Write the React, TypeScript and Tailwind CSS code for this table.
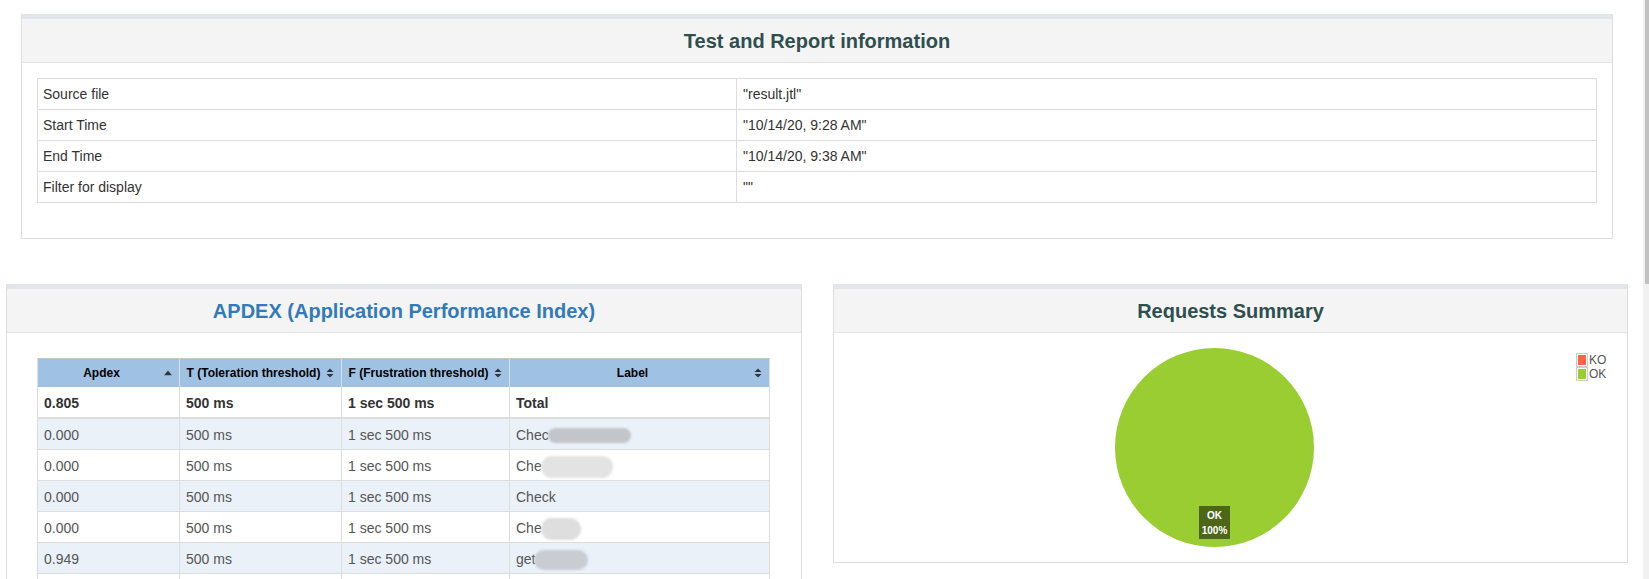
import type React from 'react';

const font = { fontFamily: '"Liberation Sans", Arial, sans-serif' };

const infoRows = [
  ['Source file', '"result.jtl"'],
  ['Start Time', '"10/14/20, 9:28 AM"'],
  ['End Time', '"10/14/20, 9:38 AM"'],
  ['Filter for display', '""'],
];

// blurred-out labels in the screenshot
const apdexRows = [
  { apdex: '0.000', label: 'Chec', blur: 'w-[83px] h-[15px] bg-[#c3c5ca]' },
  { apdex: '0.000', label: 'Che', blur: 'w-[72px] h-[22px] bg-[#e3e3e3]' },
  { apdex: '0.000', label: 'Check', blur: '' },
  { apdex: '0.000', label: 'Che', blur: 'w-[40px] h-[22px] bg-[#dedede]' },
  { apdex: '0.949', label: 'get', blur: 'w-[54px] h-[20px] bg-[#c9ccd3]' },
];

const SortAsc = () => (
  <svg width="8" height="5" viewBox="0 0 8 5">
    <path d="M0 5 L4 0 L8 5Z" fill="#333" />
  </svg>
);

const SortBoth = () => (
  <svg width="8" height="10" viewBox="0 0 8 10">
    <path d="M0.5 4 L4 0.5 L7.5 4Z M0.5 6 L7.5 6 L4 9.5Z" fill="#333" />
  </svg>
);

const PanelHeading = ({ title, blue }: { title: string; blue?: boolean }) => (
  <div
    className={`h-[44px] bg-[#f4f4f4] border-b border-[#e4e4e4] flex items-center justify-center text-[20px] font-bold ${
      blue ? 'text-[#337ab7]' : 'text-[#2f4f4f]'
    }`}
  >
    {title}
  </div>
);

const colW = ['w-[142px]', 'w-[162px]', 'w-[168px]', 'flex-1'];

export default function App(): React.ReactElement {
  return (
    <div className="w-[1649px] h-[579px] overflow-hidden bg-white flex" style={font}>
      <div className="w-[1643px]">
        {/* Test and Report information */}
        <div className="mt-[14px] ml-[21px] w-[1592px] border border-t-[5px] border-[#dddddd] border-t-[#e2e5e9] bg-white">
          <PanelHeading title="Test and Report information" />
          <div className="px-[15px] pt-[15px] pb-[35px]">
            <div className="border-t border-l border-[#dddddd] text-[14px] text-[#333]">
              {infoRows.map(([k, v]) => (
                <div key={k} className="flex h-[31px]">
                  <div className="w-[699px] border-r border-b border-[#dddddd] pl-[5px] flex items-center">{k}</div>
                  <div className="flex-1 border-r border-b border-[#dddddd] pl-[6px] flex items-center">{v}</div>
                </div>
              ))}
            </div>
          </div>
        </div>

        <div className="mt-[45px] flex">
          {/* APDEX */}
          <div className="ml-[6px] w-[796px] border border-t-[5px] border-[#dddddd] border-t-[#e2e5e9] bg-white">
            <PanelHeading title="APDEX (Application Performance Index)" blue />
            <div className="pl-[30px] pr-[31px] pt-[25px]">
              <div className="border-l border-[#dddddd]">
                <div className="flex h-[29px] bg-[#9fc1e4] border-t border-[#c6c6c6] text-[12px] font-bold text-black">
                  {['Apdex', 'T (Toleration threshold)', 'F (Frustration threshold)', 'Label'].map((h, i) => (
                    <div
                      key={h}
                      className={`${colW[i]} relative flex items-center justify-center pl-[8px] pr-[22px] whitespace-nowrap border-r border-[#d4e2f0]`}
                    >
                      {h}
                      <span className="absolute right-[7px] top-1/2 -translate-y-1/2 flex">
                        {i === 0 ? <SortAsc /> : <SortBoth />}
                      </span>
                    </div>
                  ))}
                </div>
                <div className="flex h-[32px] border-b-2 border-[#dddddd] text-[14px] font-bold text-[#333] bg-white">
                  {['0.805', '500 ms', '1 sec 500 ms', 'Total'].map((c, i) => (
                    <div key={i} className={`${colW[i]} border-r border-[#dddddd] pl-[6px] pt-[3px] flex items-center`}>
                      {c}
                    </div>
                  ))}
                </div>
                {apdexRows.map((r, idx) => (
                  <div
                    key={idx}
                    className={`flex h-[31px] border-b border-[#dddddd] text-[14px] text-[#555] ${
                      idx % 2 === 0 ? 'bg-[#eaf1f9]' : 'bg-white'
                    }`}
                  >
                    <div className={`${colW[0]} border-r border-[#dddddd] pl-[6px] pt-[3px] flex items-center`}>{r.apdex}</div>
                    <div className={`${colW[1]} border-r border-[#dddddd] pl-[6px] pt-[3px] flex items-center`}>500 ms</div>
                    <div className={`${colW[2]} border-r border-[#dddddd] pl-[6px] pt-[3px] flex items-center`}>
                      1 sec 500 ms
                    </div>
                    <div className={`${colW[3]} border-r border-[#dddddd] pl-[6px] pt-[3px] flex items-center`}>
                      <span>{r.label}</span>
                      {r.blur && <span className={`inline-block rounded-full blur-[1px] -ml-[1px] ${r.blur}`} />}
                    </div>
                  </div>
                ))}
                <div className="flex h-[31px] border-b border-[#dddddd] bg-white">
                  {colW.map((w, i) => (
                    <div key={i} className={`${w} border-r border-[#dddddd]`} />
                  ))}
                </div>
              </div>
            </div>
          </div>

          {/* Requests Summary */}
          <div className="ml-[31px] w-[795px] border border-t-[5px] border-[#dddddd] border-t-[#e2e5e9] bg-white self-start">
            <PanelHeading title="Requests Summary" />
            <div className="relative h-[229px]">
              <svg width="793" height="229" viewBox="0 0 793 229">
                <circle cx="380.5" cy="114.5" r="99.5" fill="#9acd32" />
              </svg>
              <div className="absolute left-[365px] top-[173px] w-[31px] h-[33px] bg-[#4d6619] text-white text-[10px] font-bold leading-[15px] flex flex-col items-center justify-center">
                <span>OK</span>
                <span>100%</span>
              </div>
              <div className="absolute left-[742px] top-[20px] text-[12px] text-[#545454] leading-[14px]">
                {[
                  ['KO', 'bg-[#ff6347]'],
                  ['OK', 'bg-[#9acd32]'],
                ].map(([t, c]) => (
                  <div key={t} className="flex items-center">
                    <span className="border border-[#cccccc] p-[1px] mr-[1px]">
                      <span className={`block w-[8px] h-[10px] ${c}`} />
                    </span>
                    {t}
                  </div>
                ))}
              </div>
            </div>
          </div>
        </div>
      </div>

      {/* browser scrollbar edge */}
      <div className="w-[6px] h-full bg-[#f1f1f1] flex justify-end">
        <div className="w-[4px] h-[284px] bg-[#c1c1c1]" />
      </div>
    </div>
  );
}
